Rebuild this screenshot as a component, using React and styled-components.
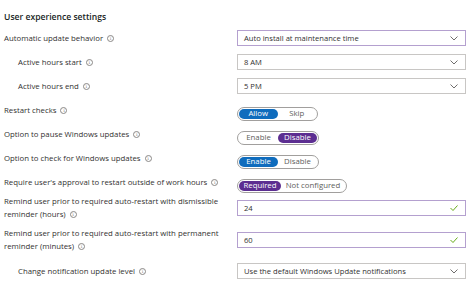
import React from "react";
import styled, { createGlobalStyle } from "styled-components";

const Global = createGlobalStyle`
  html, body { margin: 0; padding: 0; background: #fff; }
  body { font-family: "Open Sans", "Noto Sans", sans-serif; color: #323130; }
`;

const Page = styled.div`
  width: 474px;
  height: 286px;
  overflow: hidden;
  padding: 8px 8px 0 4px;
  box-sizing: border-box;
  display: flex;
  flex-direction: column;
`;

const Heading = styled.div`
  height: 18px;
  font-size: 8.6px;
  font-weight: 600;
  line-height: 18px;
  color: #201f1e;
`;

const Row = styled.div`
  display: grid;
  grid-template-columns: 233px 229px;
  align-items: center;
  height: ${(p) => p.$h || 24}px;
`;

const Label = styled.div`
  font-size: 7.8px;
  line-height: 13px;
  padding-left: ${(p) => (p.$indent ? 14 : 0)}px;
  color: #323130;
  padding-right: 10px;
`;

const Info = styled.span`
  display: inline-flex;
  align-items: center;
  justify-content: center;
  width: 7px;
  height: 7px;
  border: 0.8px solid #8a8886;
  border-radius: 50%;
  font-size: 5px;
  line-height: 1;
  color: #8a8886;
  margin-left: 4px;
  vertical-align: middle;
  box-sizing: border-box;
  font-family: "DejaVu Serif", serif;
`;

const Box = styled.div`
  height: 16px;
  box-sizing: border-box;
  border: 1px solid ${(p) => (p.$active ? "#b4a0cf" : "#c8c6c4")};
  display: flex;
  align-items: center;
  justify-content: space-between;
  padding: 0 7px 0 6px;
  font-size: 7.6px;
  color: #323130;
  background: #fff;
`;

const Toggle = styled.div`
  display: inline-flex;
  align-items: center;
  height: 14px;
  width: ${(p) => p.$w}px;
  box-sizing: border-box;
  border: 1px solid #a19f9d;
  border-radius: 8px;
  padding: 1px;
  font-size: 7.8px;
`;

const Seg = styled.div`
  flex: ${(p) => p.$flex || 1};
  height: 10px;
  border-radius: 6px;
  display: flex;
  align-items: center;
  justify-content: center;
  background: ${(p) => (p.$on ? p.$color : "transparent")};
  color: ${(p) => (p.$on ? "#fff" : "#605e5c")};
  line-height: 1;
`;

const Chevron = () => (
  <svg width="8" height="5" viewBox="0 0 8 5">
    <path d="M0.5 0.5 L4 4 L7.5 0.5" fill="none" stroke="#605e5c" strokeWidth="0.9" />
  </svg>
);

const Check = () => (
  <svg width="8" height="6" viewBox="0 0 8 6">
    <path d="M0.5 3 L3 5.5 L7.5 0.5" fill="none" stroke="#57a300" strokeWidth="0.9" />
  </svg>
);

const I = () => <Info>i</Info>;

const Select = ({ value, active }) => (
  <Box $active={active}>
    <span>{value}</span>
    <Chevron />
  </Box>
);

const Input = ({ value }) => (
  <Box $active>
    <span>{value}</span>
    <Check />
  </Box>
);

const Pill = ({ w, options, selected, color, flexes }) => (
  <div>
    <Toggle $w={w}>
      {options.map((o, i) => (
        <Seg key={o} $on={i === selected} $color={color} $flex={flexes ? flexes[i] : 1}>
          {o}
        </Seg>
      ))}
    </Toggle>
  </div>
);

const BLUE = "#0f6cbd";
const PURPLE = "#5c2e91";

export default function App() {
  return (
    <>
      <Global />
      <Page>
        <Heading>User experience settings</Heading>
        <Row>
          <Label>Automatic update behavior<I /></Label>
          <Select value="Auto install at maintenance time" active />
        </Row>
        <Row>
          <Label $indent>Active hours start<I /></Label>
          <Select value="8 AM" />
        </Row>
        <Row>
          <Label $indent>Active hours end<I /></Label>
          <Select value="5 PM" />
        </Row>
        <Row>
          <Label>Restart checks<I /></Label>
          <Pill w={81} options={["Allow", "Skip"]} selected={0} color={BLUE} />
        </Row>
        <Row>
          <Label>Option to pause Windows updates<I /></Label>
          <Pill w={82} options={["Enable", "Disable"]} selected={1} color={PURPLE} />
        </Row>
        <Row>
          <Label>Option to check for Windows updates<I /></Label>
          <Pill w={82} options={["Enable", "Disable"]} selected={0} color={BLUE} />
        </Row>
        <Row>
          <Label>Require user's approval to restart outside of work hours<I /></Label>
          <Pill w={110} options={["Required", "Not configured"]} selected={0} color={PURPLE} flexes={[42, 64]} />
        </Row>
        <Row $h={28}>
          <Label>Remind user prior to required auto-restart with dismissible reminder (hours)<I /></Label>
          <Input value="24" />
        </Row>
        <Row $h={36}>
          <Label>Remind user prior to required auto-restart with permanent reminder (minutes)<I /></Label>
          <Input value="60" />
        </Row>
        <Row $h={26}>
          <Label $indent>Change notification update level<I /></Label>
          <Select value="Use the default Windows Update notifications" />
        </Row>
      </Page>
    </>
  );
}
